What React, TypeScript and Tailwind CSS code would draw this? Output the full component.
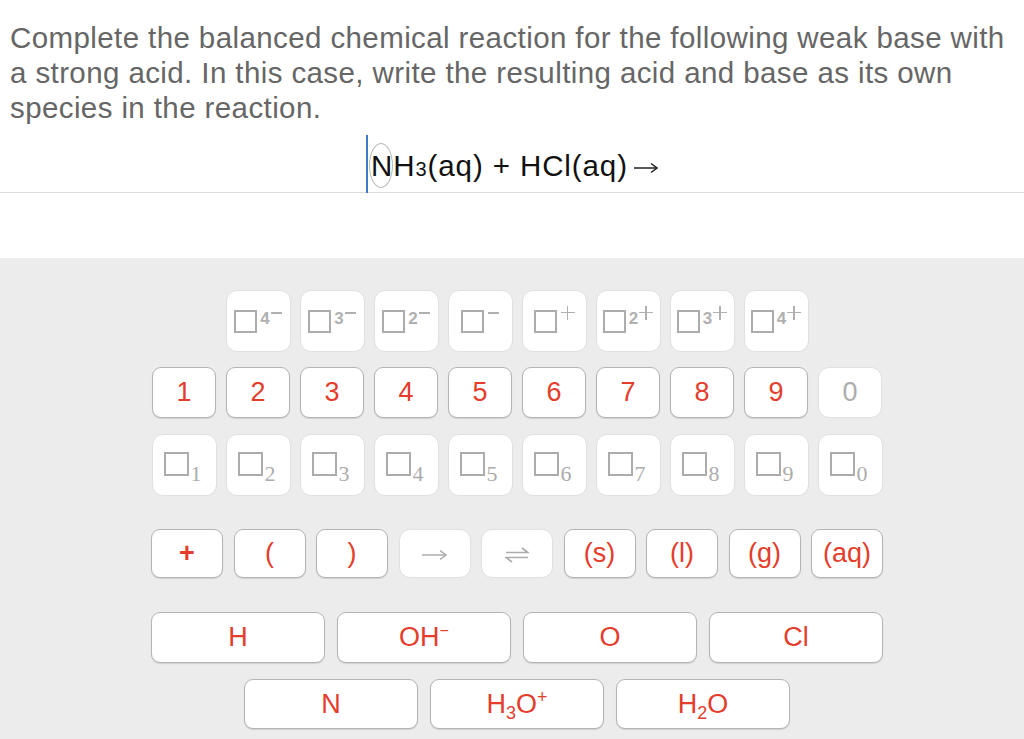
const sans = { fontFamily: '"Liberation Sans", Arial, sans-serif' }

function Key({
  w,
  h,
  active = true,
  children,
}: {
  w: string
  h: string
  active?: boolean
  children: React.ReactNode
}) {
  return (
    <div
      className={
        active
          ? `${w} ${h} flex items-center justify-center rounded-[9px] border border-[#b4b4b4] bg-white text-[27px] text-[#e43d2c] shadow-[0_1px_1px_rgba(0,0,0,0.12)]`
          : `${w} ${h} flex items-center justify-center rounded-[11px] border border-[#e0e0e0] bg-white text-[27px] text-[#acacac]`
      }
    >
      {children}
    </div>
  )
}

function Box({ size }: { size: string }) {
  return <span className={`${size} inline-block border-2 border-[#acacac]`} />
}

function Arrow({ color, w = 24 }: { color: string; w?: number }) {
  return (
    <svg width={w} height="12" viewBox={`0 0 ${w} 12`} fill="none" stroke={color} strokeWidth="1.5">
      <path d={`M0 6H${w - 1}`} />
      <path d={`M${w - 7} 1.5L${w - 1} 6L${w - 7} 10.5`} />
    </svg>
  )
}

function Equil() {
  return (
    <svg width="24" height="16" viewBox="0 0 24 16" fill="none" stroke="#acacac" strokeWidth="1.6">
      <path d="M1 5.5H23L17 1" />
      <path d="M23 10.5H1L7 15" />
    </svg>
  )
}

const charges = [
  { n: "4", s: "-" },
  { n: "3", s: "-" },
  { n: "2", s: "-" },
  { n: "", s: "-" },
  { n: "", s: "+" },
  { n: "2", s: "+" },
  { n: "3", s: "+" },
  { n: "4", s: "+" },
]
const nums = ["1", "2", "3", "4", "5", "6", "7", "8", "9", "0"]

function Sign({ s }: { s: string }) {
  if (s === "-") return <span className="mt-[2px] ml-[1px] inline-block h-[2px] w-[11px] bg-[#b0b0b0]" />
  return (
    <span className="relative -mt-[4px] ml-[1px] inline-block h-[14px] w-[14px]">
      <span className="absolute left-0 top-[6px] h-[1.5px] w-[14px] bg-[#b0b0b0]" />
      <span className="absolute left-[6px] top-0 h-[14px] w-[1.5px] bg-[#b0b0b0]" />
    </span>
  )
}

export default function App() {
  return (
    <div className="flex h-[739px] w-[1024px] flex-col bg-white" style={sans}>
      <p className="pl-[10px] pt-[20px] text-[29.5px] leading-[35px] tracking-[0.4px] text-[#666666]">
        Complete the balanced chemical reaction for the following weak base with
        <br />
        a strong acid. In this case, write the resulting acid and base as its own
        <br />
        species in the reaction.
      </p>

      <div className="mt-[10px] flex h-[58px] justify-center border-b border-[#dcdcdc]">
        <div className="flex h-[58px] items-start">
          <span className="h-[58px] w-[2px] bg-[#3d7cc0]" />
          <span className="mt-[16px] ml-[3px] flex items-center whitespace-nowrap text-[29.5px] leading-[29px] tracking-[0.9px] text-[#111]">
            <span className="relative">
              N
              <span className="absolute -left-[2px] -top-[8px] h-[45px] w-[24px] rounded-[50%] border border-[#b8b8b8]" />
            </span>
            <span>H</span>
            <span className="relative top-[4px] text-[20px]">3</span>
            <span>(aq) + HCl(aq)</span>
            <span className="ml-[6px] mt-[4px]">
              <Arrow color="#222" w={24} />
            </span>
          </span>
        </div>
      </div>

      <div className="h-[65px]" />

      <div className="h-[481px] bg-[#ececec] pt-[32px]">
        <div className="ml-[150px] flex w-[734px] flex-col items-center">
          <div className="flex h-[62px] gap-[9px]">
            {charges.map((c) => (
              <Key key={c.n + c.s} w="w-[65px]" h="h-[62px]" active={false}>
                <span className="flex items-start">
                  <Box size="h-[23px] w-[23px]" />
                  <span className="ml-[3px] flex items-start">
                    {c.n && (
                      <span className="text-[17px] font-bold leading-[17px] text-[#b0b0b0]">{c.n}</span>
                    )}
                    <Sign s={c.s} />
                  </span>
                </span>
              </Key>
            ))}
          </div>

          <div className="mt-[15px] flex h-[51px] gap-[10px]">
            {nums.map((n) => (
              <Key key={n} w="w-[64px]" h="h-[51px]" active={n !== "0"}>
                {n}
              </Key>
            ))}
          </div>

          <div className="mt-[16px] flex h-[62px] gap-[9px]">
            {nums.map((n) => (
              <Key key={n} w="w-[65px]" h="h-[62px]" active={false}>
                <span className="-ml-[3px] flex items-start pt-[6px]">
                  <Box size="h-[24px] w-[25px]" />
                  <span
                    className="mt-[11px] ml-[2px] text-[22px] leading-[22px] text-[#acacac]"
                    style={{ fontFamily: '"Liberation Serif", serif' }}
                  >
                    {n}
                  </span>
                </span>
              </Key>
            ))}
          </div>

          <div className="mt-[33px] flex h-[49px] gap-[10.5px]">
            <Key w="w-[72px]" h="h-[49px]">
              <span className="font-bold">+</span>
            </Key>
            <Key w="w-[72px]" h="h-[49px]">(</Key>
            <Key w="w-[72px]" h="h-[49px]">)</Key>
            <Key w="w-[72px]" h="h-[49px]" active={false}>
              <span className="mt-[2px]">
                <Arrow color="#acacac" w={25} />
              </span>
            </Key>
            <Key w="w-[72px]" h="h-[49px]" active={false}>
              <span className="mt-[2px]">
                <Equil />
              </span>
            </Key>
            <Key w="w-[72px]" h="h-[49px]">(s)</Key>
            <Key w="w-[72px]" h="h-[49px]">(l)</Key>
            <Key w="w-[72px]" h="h-[49px]">(g)</Key>
            <Key w="w-[72px]" h="h-[49px]">(aq)</Key>
          </div>

          <div className="mt-[34px] flex h-[51px] gap-[12px]">
            <Key w="w-[174px]" h="h-[51px]">H</Key>
            <Key w="w-[174px]" h="h-[51px]">
              <span>
                OH<span className="relative -top-[10px] text-[16px]">−</span>
              </span>
            </Key>
            <Key w="w-[174px]" h="h-[51px]">O</Key>
            <Key w="w-[174px]" h="h-[51px]">Cl</Key>
          </div>

          <div className="mt-[16px] flex h-[50px] gap-[12px]">
            <Key w="w-[174px]" h="h-[50px]">N</Key>
            <Key w="w-[174px]" h="h-[50px]">
              <span>
                H<span className="relative top-[6px] text-[18px]">3</span>O
                <span className="relative -top-[10px] text-[18px]">+</span>
              </span>
            </Key>
            <Key w="w-[174px]" h="h-[50px]">
              <span>
                H<span className="relative top-[6px] text-[18px]">2</span>O
              </span>
            </Key>
          </div>
        </div>
      </div>
    </div>
  )
}
